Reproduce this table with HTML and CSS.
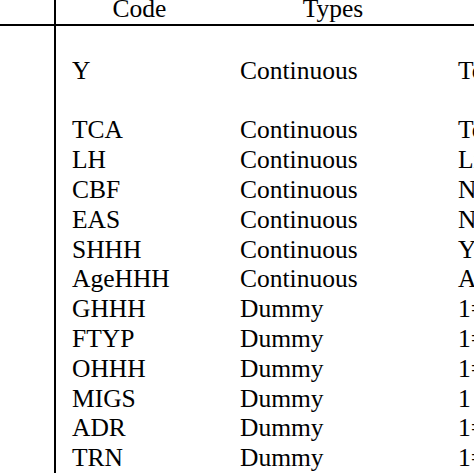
FILE: index.html
```html
<!DOCTYPE html>
<html lang="en">
<head>
<meta charset="utf-8">
<title>Variables table</title>
<link rel="stylesheet" href="styles.css">
</head>
<body>
<div class="sheet">
  <div class="row head">
    <div class="lead"></div>
    <div class="c code">Code</div>
    <div class="c type">Types</div>
    <div class="c desc"></div>
  </div>
  <div class="row"><div class="lead"></div><div class="c"></div><div class="c"></div><div class="c"></div></div>
  <div class="row"><div class="lead"></div><div class="c">Y</div><div class="c">Continuous</div><div class="c">Total income</div></div>
  <div class="row"><div class="lead"></div><div class="c"></div><div class="c"></div><div class="c"></div></div>
  <div class="row"><div class="lead"></div><div class="c">TCA</div><div class="c">Continuous</div><div class="c">Total cultivated area</div></div>
  <div class="row"><div class="lead"></div><div class="c">LH</div><div class="c">Continuous</div><div class="c">Livestock holding</div></div>
  <div class="row"><div class="lead"></div><div class="c">CBF</div><div class="c">Continuous</div><div class="c">Number of bank facilities</div></div>
  <div class="row"><div class="lead"></div><div class="c">EAS</div><div class="c">Continuous</div><div class="c">Number of extension visits</div></div>
  <div class="row"><div class="lead"></div><div class="c">SHHH</div><div class="c">Continuous</div><div class="c">Years of schooling</div></div>
  <div class="row"><div class="lead"></div><div class="c">AgeHHH</div><div class="c">Continuous</div><div class="c">Age of household head</div></div>
  <div class="row"><div class="lead"></div><div class="c">GHHH</div><div class="c">Dummy</div><div class="c">1=male, 0=female</div></div>
  <div class="row"><div class="lead"></div><div class="c">FTYP</div><div class="c">Dummy</div><div class="c">1=joint, 0=nuclear</div></div>
  <div class="row"><div class="lead"></div><div class="c">OHHH</div><div class="c">Dummy</div><div class="c">1=farming, 0=otherwise</div></div>
  <div class="row"><div class="lead"></div><div class="c">MIGS</div><div class="c">Dummy</div><div class="c">1 if migrated, 0 otherwise</div></div>
  <div class="row"><div class="lead"></div><div class="c">ADR</div><div class="c">Dummy</div><div class="c">1=access, 0=otherwise</div></div>
  <div class="row"><div class="lead"></div><div class="c">TRN</div><div class="c">Dummy</div><div class="c">1=trained, 0=otherwise</div></div>
</div>
</body>
</html>
```

FILE: styles.css
```css
html, body {
  margin: 0;
  padding: 0;
  overflow: hidden;
  background: #fff;
}

.sheet {
  width: 760px;
  margin-top: -6px;
  font-family: "Liberation Serif", "Times New Roman", serif;
  font-size: 25.5px;
  color: #000;
}

.row {
  display: grid;
  grid-template-columns: 56px 167px 220px 317px;
  height: 29.8px;
  line-height: 29.8px;
  white-space: nowrap;
}

.row.head {
  height: 30px;
  line-height: 30px;
  border-bottom: 2px solid #000;
}

.lead {
  border-right: 2px solid #000;
}

.c {
  padding-left: 16px;
}

.row > .c:nth-child(3) {
  padding-left: 17px;
}

.row > .c:nth-child(4) {
  padding-left: 15px;
}

.head .code,
.head .type {
  text-align: center;
}

.head > .c:nth-child(2),
.head > .c:nth-child(3) {
  padding-left: 0;
}
```
